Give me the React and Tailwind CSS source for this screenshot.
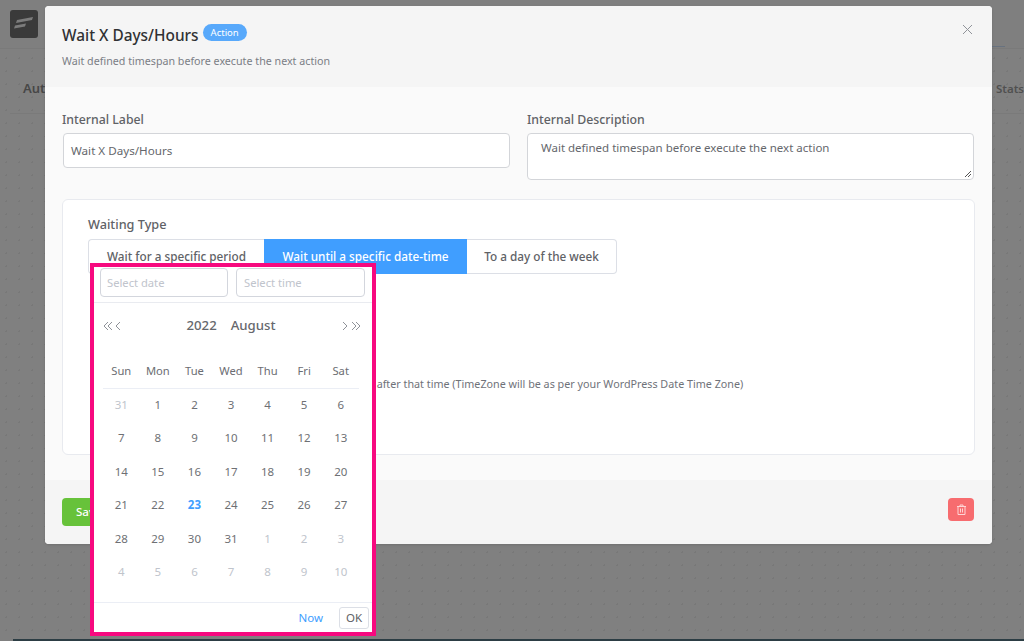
import React from "react";

const weeks = [
  [[31, 0], [1, 1], [2, 1], [3, 1], [4, 1], [5, 1], [6, 1]],
  [[7, 1], [8, 1], [9, 1], [10, 1], [11, 1], [12, 1], [13, 1]],
  [[14, 1], [15, 1], [16, 1], [17, 1], [18, 1], [19, 1], [20, 1]],
  [[21, 1], [22, 1], [23, 2], [24, 1], [25, 1], [26, 1], [27, 1]],
  [[28, 1], [29, 1], [30, 1], [31, 1], [1, 0], [2, 0], [3, 0]],
  [[4, 0], [5, 0], [6, 0], [7, 0], [8, 0], [9, 0], [10, 0]],
];

function Chevrons({ dir, double }) {
  const d = dir === "left" ? "M6 1 L2 5 L6 9" : "M2 1 L6 5 L2 9";
  const d2 = dir === "left" ? "M10 1 L6 5 L10 9" : "M6 1 L10 5 L6 9";
  return (
    <svg width={double ? 11 : 8} height="10" viewBox={double ? "0 0 11 10" : "0 0 8 10"} fill="none" stroke="#8f9299" strokeWidth="1">
      <path d={d} />
      {double && <path d={d2} />}
    </svg>
  );
}

function Calendar() {
  return (
    <div className="absolute left-[90px] top-[263px] w-[286px] h-[373px] bg-white border-[4px] border-[#f7097f] flex flex-col text-[#6b6d72]">
      <div className="flex gap-2 px-[6px] pt-[1px] border-b border-[#e9ebf0] h-[36px] shrink-0">
        <div className="w-[128px] h-[29px] border border-[#d3d6dd] rounded-[4px] px-[6px] pt-[1px] flex items-center text-[11.2px] text-[#c0c4cc]">Select date</div>
        <div className="w-[129px] h-[29px] border border-[#d3d6dd] rounded-[4px] px-[7px] pt-[1px] flex items-center text-[11.2px] text-[#c0c4cc]">Select time</div>
      </div>
      <div className="flex items-center justify-between pl-[8px] pr-[11px] h-[45px] shrink-0">
        <div className="flex items-center gap-[1px]"><Chevrons dir="left" double /><Chevrons dir="left" /></div>
        <div className="flex gap-[14px] text-[13.2px] font-medium text-[#66686d] mr-[1px]">
          <span>2022</span><span>August</span>
        </div>
        <div className="flex items-center gap-[1px]"><Chevrons dir="right" /><Chevrons dir="right" double /></div>
      </div>
      <div className="pl-[9px]">
        <div className="w-[256px] grid grid-cols-7 h-[37px] items-center border-b border-[#ebeef5] mt-[4px] pt-[2px] text-[11.2px] text-center">
          {["Sun", "Mon", "Tue", "Wed", "Thu", "Fri", "Sat"].map((d) => <span key={d}>{d}</span>)}
        </div>
        <div className="w-[256px] grid grid-cols-7 auto-rows-[33.4px] -mt-[1px]">
          {weeks.flat().map(([n, t], i) => (
            <span key={i} className={"flex items-center justify-center text-[11.5px] " + (t === 0 ? "text-[#c0c4cc]" : t === 2 ? "text-[#409eff] font-bold" : "text-[#6e7074]")}>{n}</span>
          ))}
        </div>
      </div>
      <div className="mt-auto h-[30px] border-t border-[#ebeef5] flex items-center justify-end gap-[16px] pr-[3px] shrink-0">
        <span className="text-[11.5px] text-[#409eff]">Now</span>
        <span className="w-[30px] h-[22px] border border-[#dcdfe6] rounded-[3px] flex items-center justify-center text-[11.5px] text-[#606266]">OK</span>
      </div>
    </div>
  );
}

function Modal() {
  return (
    <div className="absolute left-[45px] top-[6px] w-[947px] h-[538px] rounded-[4px] overflow-hidden bg-[#fafafa] flex flex-col shadow-sm">
      <div className="h-[81px] bg-[#f5f5f5] px-[17px] pt-[16px] shrink-0 relative">
        <div className="flex items-start gap-[4px]">
          <span className="text-[15.4px] leading-[28px] font-medium text-[#303133]">Wait X Days/Hours</span>
          <span className="mt-[2px] h-[17px] px-[8px] rounded-full bg-[#58a9fb] text-white text-[9.5px] leading-[17px]">Action</span>
        </div>
        <p className="text-[10.7px] leading-[16px] mt-[3px] text-[#7b7e85]">Wait defined timespan before execute the next action</p>
        <svg className="absolute right-[19px] top-[18px]" width="11" height="11" viewBox="0 0 11 11" stroke="#909399" strokeWidth="1" fill="none"><path d="M1 1 L10 10 M10 1 L1 10" /></svg>
      </div>
      <div className="flex-1 px-[17px] pt-[24px] flex flex-col">
        <div className="flex gap-[17px]">
          <div className="w-[448px] pl-[1px]">
            <div className="text-[12.3px] leading-[18px] font-medium text-[#606266] -ml-[1px]">Internal Label</div>
            <div className="mt-[4px] h-[35px] bg-white border border-[#d3d5d9] rounded-[4px] px-[7px] pt-[1px] flex items-center text-[11.65px] text-[#65676c]">Wait X Days/Hours</div>
          </div>
          <div className="w-[447px]">
            <div className="text-[12.3px] leading-[18px] font-medium text-[#606266]">Internal Description</div>
            <div className="mt-[4px] h-[47px] bg-white border border-[#d3d5d9] rounded-[4px] px-[13px] pt-[5px] text-[11.5px] leading-[18px] text-[#65676c] relative">
              Wait defined timespan before execute the next action
              <svg className="absolute right-[1px] bottom-[1px]" width="8" height="8" viewBox="0 0 8 8" stroke="#555" strokeWidth="1" fill="none"><path d="M1 7 L7 1 M4 7 L7 4" /></svg>
            </div>
          </div>
        </div>
        <div className="mt-[19px] w-[913px] h-[256px] bg-white border border-[#e8eaef] rounded-[6px] pl-[25px] pt-[15px] shrink-0">
          <div className="text-[12.7px] leading-[18px] font-medium text-[#606266]">Waiting Type</div>
          <div className="flex mt-[6px] h-[35px] text-[11.75px] font-medium">
            <div className="w-[176px] border border-[#dcdfe6] border-r-0 rounded-l-[4px] pt-[1px] text-[#606266] flex items-center justify-center">Wait for a specific period</div>
            <div className="w-[203px] bg-[#409eff] pt-[1px] text-white flex items-center justify-center">Wait until a specific date-time</div>
            <div className="w-[150px] border border-[#dcdfe6] border-l-0 rounded-r-[4px] pt-[1px] text-[#606266] flex items-center justify-center">To a day of the week</div>
          </div>
          <p className="mt-[102px] ml-[34px] text-[10.75px] leading-[16px] text-[#6f7279] whitespace-nowrap">Input date and time and this step will be executed after that time (TimeZone will be as per your WordPress Date Time Zone)</p>
        </div>
      </div>
      <div className="h-[64px] bg-[#f5f5f5] px-[17px] pr-[18px] pt-[18px] flex justify-between items-start shrink-0">
        <div className="h-[28px] px-[14px] bg-[#67c23a] rounded-[4px] text-white text-[11.5px] font-medium flex items-center">Save Settings</div>
        <div className="w-[26px] h-[23px] bg-[#f76c6f] rounded-[4px] flex items-center justify-center">
          <svg width="11" height="11" viewBox="0 0 11 11" fill="none" stroke="#ffd5d6" strokeWidth="1"><path d="M1 2.5 H10 M4 2.5 V1 H7 V2.5 M2 2.5 V10.5 H9 V2.5 M4.5 4.5 V8.5 M6.5 4.5 V8.5" /></svg>
        </div>
      </div>
    </div>
  );
}

export default function App() {
  return (
    <div className="relative w-[1024px] h-[641px] overflow-hidden bg-[#808080]" style={{ fontFamily: '"Noto Sans", sans-serif' }}>
      <div className="absolute inset-0 bg-[radial-gradient(#787878_1px,transparent_1px)] bg-[length:13px_13px]" />
      <div className="relative flex flex-col h-full">
        <div className="h-[49px] bg-[#7f7f7f] border-b border-[#7a7a7a] pl-[10px] pr-[19px] pt-[10px] shrink-0 flex justify-between">
          <div className="w-[28px] h-[28px] rounded-[3px] bg-[#3a3a3a] flex items-center justify-center">
            <svg width="20" height="14" viewBox="0 0 20 14" fill="#7c7c7c"><path d="M3 3 L19 0 L18 3 L2 6 Z M1 8.5 L12 6.5 L11 9.5 L0 11.5 Z" /></svg>
          </div>
          <div className="w-[30px] h-[1px] bg-[#68727f] self-end mb-[1px]" />
        </div>
        <div className="ml-[10px] mt-[16px] h-[49px] flex items-center justify-between border-b border-[#7a7a7a] pl-[13px]">
          <span className="text-[13px] font-semibold text-[#474747]">Automation</span>
          <span className="text-[11.5px] font-semibold text-[#505050]">Stats</span>
        </div>
      </div>
      <div className="absolute bottom-0 left-[13px] right-0 h-[2px] bg-[#2c3d44]" />
      <Modal />
      <Calendar />
    </div>
  );
}
